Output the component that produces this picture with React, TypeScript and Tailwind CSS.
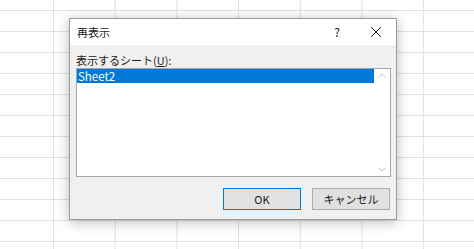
import React from "react";

export default function App() {
  const font = { fontFamily: '"Noto Sans CJK JP", "Noto Sans", sans-serif' };
  return (
    <div
      className="relative w-[474px] h-[249px] overflow-hidden bg-white bg-[linear-gradient(to_right,#e0e0e0_1px,transparent_1px),linear-gradient(to_bottom,#e0e0e0_1px,transparent_1px)] bg-[size:61.7px_21px] bg-[position:53px_10px]"
      style={font}
    >
      <div className="absolute left-[69px] top-[18px] w-[328px] h-[202px] border border-[#9c9c9c] bg-[#f0f0f0] flex flex-col shadow-[0_2px_12px_rgba(0,0,0,0.28)]">
        <div className="h-[26px] bg-white flex items-center pl-[7px] text-[11px] text-[#1a1a1a]">
          <span className="flex-1">再表示</span>
          <span className="w-[14px] text-center text-[12px] mr-[26px]">?</span>
          <svg width="12" height="12" viewBox="0 0 12 12" className="mr-[14px]">
            <path d="M1 1 L11 11 M11 1 L1 11" stroke="#222" strokeWidth="1" />
          </svg>
        </div>
        <div className="flex-1 flex flex-col pl-[6px] pr-[5px] pt-[8px]">
          <div className="h-[14px] leading-[14px] text-[11px] text-[#1a1a1a]">
            表示するシート(<span className="underline">U</span>):
          </div>
          <div className="mt-[1px] h-[109px] border border-[#a8a8a8] bg-white flex">
            <div className="flex-1 pt-[0px]">
              <div className="h-[14px] leading-[14px] bg-[#0078d7] text-white text-[11.5px] pl-[1px]">Sheet2</div>
            </div>
            <div className="w-[16px] flex flex-col items-center justify-between py-[4px]">
              <svg width="8" height="5" viewBox="0 0 8 5">
                <path d="M0.5 4.5 L4 1 L7.5 4.5" stroke="#c4c4c4" fill="none" strokeWidth="1" />
              </svg>
              <svg width="8" height="5" viewBox="0 0 8 5">
                <path d="M0.5 0.5 L4 4 L7.5 0.5" stroke="#c4c4c4" fill="none" strokeWidth="1" />
              </svg>
            </div>
          </div>
          <div className="mt-[11px] flex justify-end gap-[11px] pr-[1px]">
            <div className="w-[78px] h-[22px] border border-[#0078d7] bg-[#e1e1e1] flex items-center justify-center text-[11px] text-[#1a1a1a]">
              OK
            </div>
            <div className="w-[78px] h-[22px] border border-[#adadad] bg-[#e1e1e1] flex items-center justify-center text-[11px] text-[#1a1a1a]">
              キャンセル
            </div>
          </div>
        </div>
      </div>
    </div>
  );
}
